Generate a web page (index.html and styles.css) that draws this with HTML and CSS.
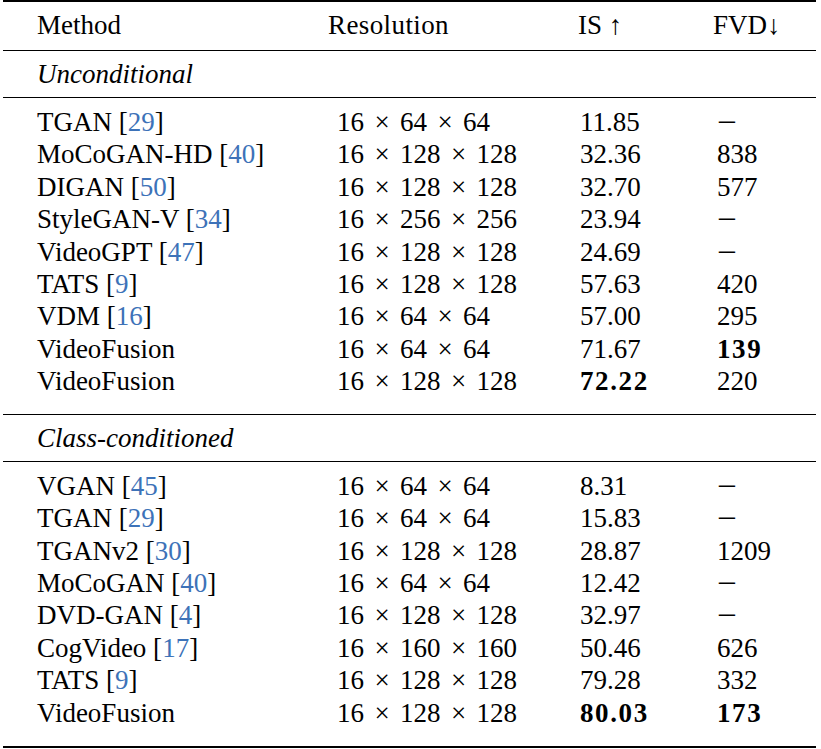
FILE: index.html
```html
<!DOCTYPE html>
<html lang="en">
<head>
<meta charset="utf-8">
<title>Video generation results</title>
<link rel="stylesheet" href="styles.css">
</head>
<body>
<div class="table">
  <div class="head row">
    <div class="c1">Method</div>
    <div class="c2h">Resolution</div>
    <div class="c3h">IS ↑</div>
    <div class="c4h">FVD↓</div>
  </div>

  <div class="group-title"><span class="it">Unconditional</span></div>
  <div class="group-body">
    <div class="row"><div class="c1">TGAN [<span class="cite">29</span>]</div><div class="c2">16<span class="x">×</span>64<span class="x">×</span>64</div><div class="c3">11.85</div><div class="c4"><span class="minus">−</span></div></div>
    <div class="row"><div class="c1">MoCoGAN-HD [<span class="cite">40</span>]</div><div class="c2">16<span class="x">×</span>128<span class="x">×</span>128</div><div class="c3">32.36</div><div class="c4">838</div></div>
    <div class="row"><div class="c1">DIGAN [<span class="cite">50</span>]</div><div class="c2">16<span class="x">×</span>128<span class="x">×</span>128</div><div class="c3">32.70</div><div class="c4">577</div></div>
    <div class="row"><div class="c1">StyleGAN-V [<span class="cite">34</span>]</div><div class="c2">16<span class="x">×</span>256<span class="x">×</span>256</div><div class="c3">23.94</div><div class="c4"><span class="minus">−</span></div></div>
    <div class="row"><div class="c1">VideoGPT [<span class="cite">47</span>]</div><div class="c2">16<span class="x">×</span>128<span class="x">×</span>128</div><div class="c3">24.69</div><div class="c4"><span class="minus">−</span></div></div>
    <div class="row"><div class="c1">TATS [<span class="cite">9</span>]</div><div class="c2">16<span class="x">×</span>128<span class="x">×</span>128</div><div class="c3">57.63</div><div class="c4">420</div></div>
    <div class="row"><div class="c1">VDM [<span class="cite">16</span>]</div><div class="c2">16<span class="x">×</span>64<span class="x">×</span>64</div><div class="c3">57.00</div><div class="c4">295</div></div>
    <div class="row"><div class="c1">VideoFusion</div><div class="c2">16<span class="x">×</span>64<span class="x">×</span>64</div><div class="c3">71.67</div><div class="c4"><b class="bd">139</b></div></div>
    <div class="row"><div class="c1">VideoFusion</div><div class="c2">16<span class="x">×</span>128<span class="x">×</span>128</div><div class="c3"><b class="bd">72.22</b></div><div class="c4">220</div></div>
  </div>

  <div class="group-title"><span class="it">Class-conditioned</span></div>
  <div class="group-body last">
    <div class="row"><div class="c1">VGAN [<span class="cite">45</span>]</div><div class="c2">16<span class="x">×</span>64<span class="x">×</span>64</div><div class="c3">8.31</div><div class="c4"><span class="minus">−</span></div></div>
    <div class="row"><div class="c1">TGAN [<span class="cite">29</span>]</div><div class="c2">16<span class="x">×</span>64<span class="x">×</span>64</div><div class="c3">15.83</div><div class="c4"><span class="minus">−</span></div></div>
    <div class="row"><div class="c1">TGANv2 [<span class="cite">30</span>]</div><div class="c2">16<span class="x">×</span>128<span class="x">×</span>128</div><div class="c3">28.87</div><div class="c4">1209</div></div>
    <div class="row"><div class="c1">MoCoGAN [<span class="cite">40</span>]</div><div class="c2">16<span class="x">×</span>64<span class="x">×</span>64</div><div class="c3">12.42</div><div class="c4"><span class="minus">−</span></div></div>
    <div class="row"><div class="c1">DVD-GAN [<span class="cite">4</span>]</div><div class="c2">16<span class="x">×</span>128<span class="x">×</span>128</div><div class="c3">32.97</div><div class="c4"><span class="minus">−</span></div></div>
    <div class="row"><div class="c1">CogVideo [<span class="cite">17</span>]</div><div class="c2">16<span class="x">×</span>160<span class="x">×</span>160</div><div class="c3">50.46</div><div class="c4">626</div></div>
    <div class="row"><div class="c1">TATS [<span class="cite">9</span>]</div><div class="c2">16<span class="x">×</span>128<span class="x">×</span>128</div><div class="c3">79.28</div><div class="c4">332</div></div>
    <div class="row"><div class="c1">VideoFusion</div><div class="c2">16<span class="x">×</span>128<span class="x">×</span>128</div><div class="c3"><b class="bd">80.03</b></div><div class="c4"><b class="bd">173</b></div></div>
  </div>
</div>
</body>
</html>
```

FILE: styles.css
```css
html, body {
  margin: 0;
  padding: 0;
  background: #fff;
}

body {
  font-family: "Liberation Serif", "Times New Roman", serif;
  font-size: 27px;
  color: #000;
}

.table {
  width: 813px;
  margin: 0 0 0 3px;
  border-top: 2px solid #000;
  border-bottom: 2px solid #000;
}

.row {
  display: grid;
  grid-template-columns: 325px 250px 135px 1fr;
  line-height: 32.4px;
  white-space: nowrap;
}

.head {
  padding: 7px 0 9px;
  border-bottom: 1px solid #000;
}

.c2h {
  letter-spacing: 0.4px;
}

.group-title {
  padding: 6.6px 0 6.6px 34px;
  line-height: 32.4px;
  border-bottom: 1px solid #000;
}

.it {
  font-style: italic;
}

.group-body {
  padding: 8px 0 16.6px;
  border-bottom: 1px solid #000;
}

.group-body.last {
  border-bottom: none;
}

.c1 {
  padding-left: 34px;
}

.c2 {
  padding-left: 9px;
}

.c3 {
  padding-left: 2px;
}

.c4 {
  padding-left: 4px;
}

.x {
  margin: 0 10.4px;
}

.minus {
  display: inline-block;
  transform: scaleX(1.3);
  transform-origin: left center;
}

.cite {
  color: #3d72b8;
}

.bd {
  font-weight: bold;
  letter-spacing: 1.6px;
}
```
